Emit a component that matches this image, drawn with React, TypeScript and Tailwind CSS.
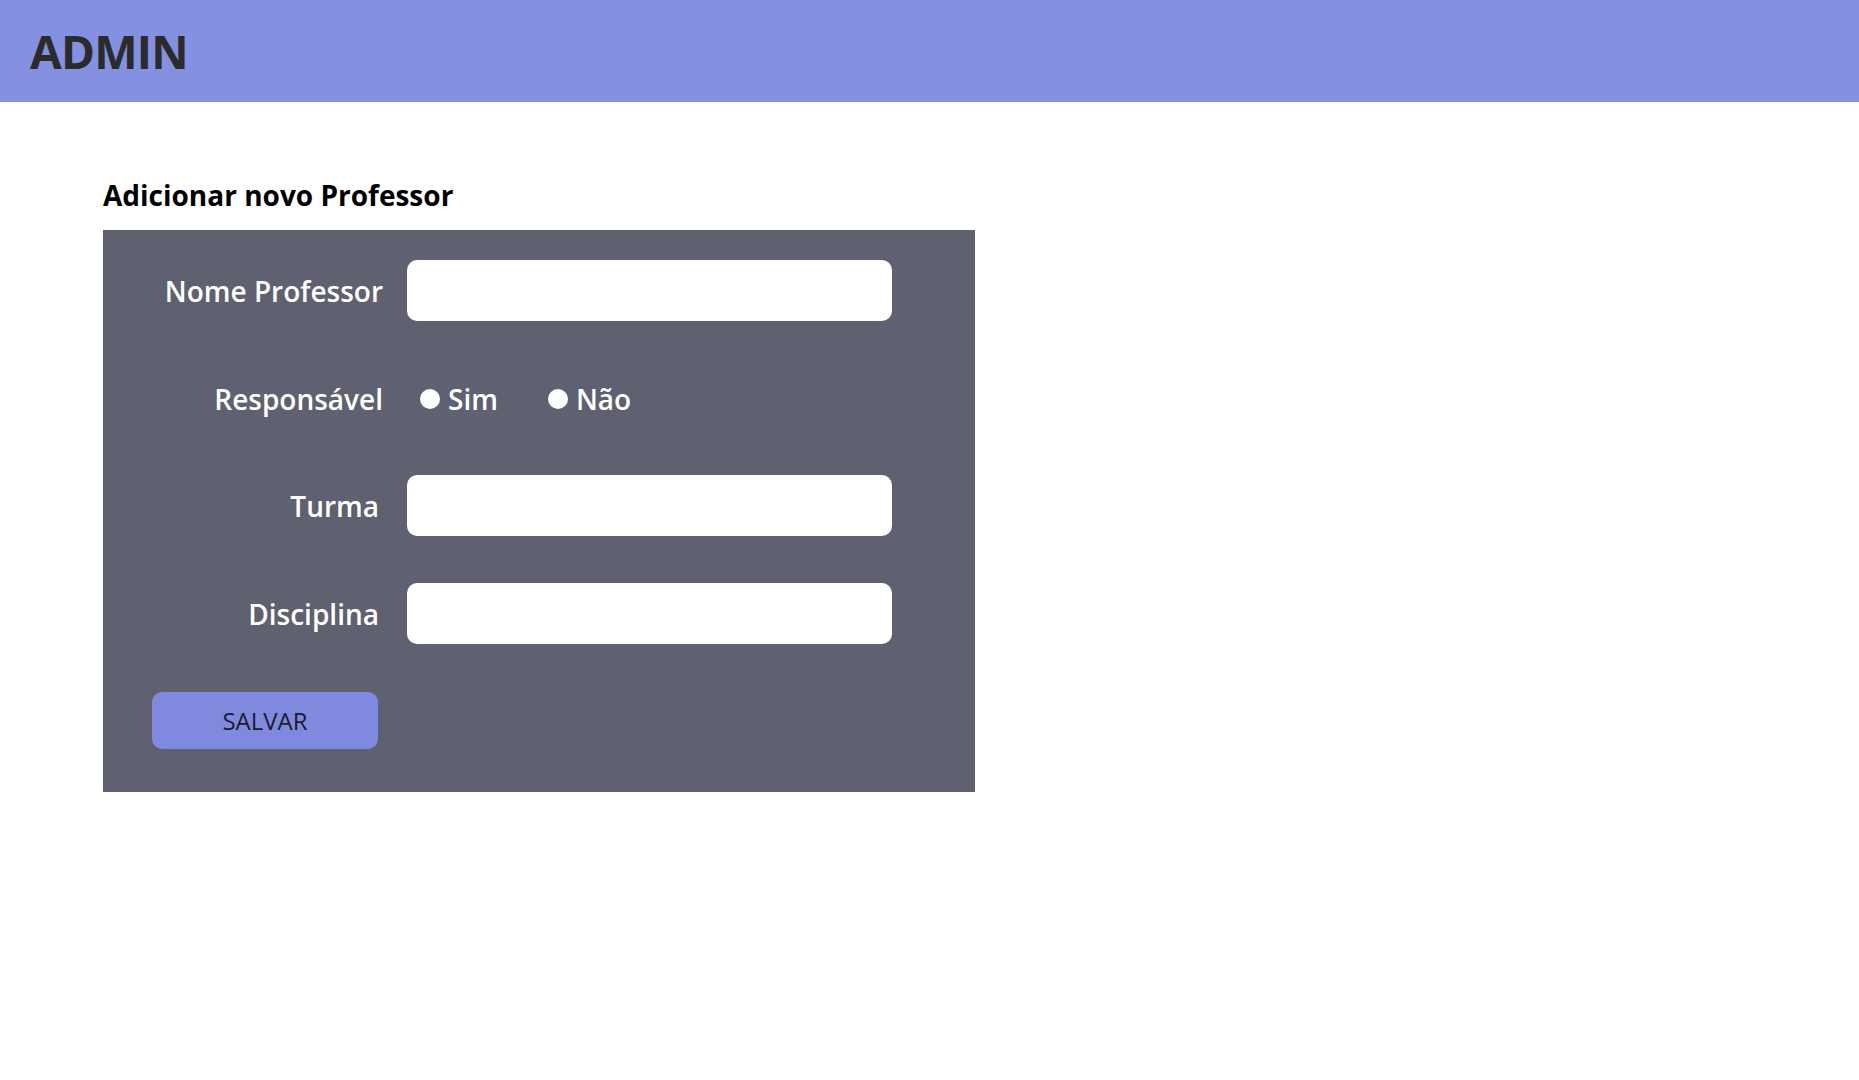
import React from "react";

const font = { fontFamily: '"Segoe UI", "Open Sans", "Noto Sans", sans-serif' };

function Field({ label, inset = false }: { label: string; inset?: boolean }) {
  return (
    <div className="flex h-[61px] items-center">
      <label
        className={
          inset
            ? "w-[281px] pr-[5px] text-right text-[28px] font-semibold text-white"
            : "w-[281px] pr-[1px] text-right text-[28px] font-semibold text-white"
        }
      >
        {label}
      </label>
      <input type="text" className="ml-[23px] h-[61px] w-[485px] rounded-[10px] bg-white px-3 text-[24px] outline-none" />
    </div>
  );
}

function Radio({ label }: { label: string }) {
  return (
    <label className="flex items-center">
      <span className="h-[20px] w-[20px] rounded-full bg-white" />
      <span className="ml-[8px] text-[28px] font-semibold text-white">{label}</span>
    </label>
  );
}

export default function App() {
  return (
    <div className="min-h-screen bg-white" style={font}>
      <header className="flex h-[102px] items-center bg-[#8490e0] px-[30px]">
        <h1 className="text-[46px] font-bold tracking-[-0.8px] text-[#2b2b2b]">ADMIN</h1>
      </header>

      <main className="pl-[103px] pt-[74px]">
        <h3 className="text-[28px] font-bold leading-[38px] text-black">Adicionar novo Professor</h3>

        <form className="mt-[16px] w-[872px] bg-[#5f6070] pb-[43px] pt-[30px]" onSubmit={(e) => e.preventDefault()}>
          <Field label="Nome Professor" />

          <div className="mt-[58px] flex h-[40px] items-center">
            <span className="w-[281px] pr-[1px] text-right text-[28px] font-semibold text-white">Responsável</span>
            <div className="ml-[36px] flex items-center gap-[50px]">
              <Radio label="Sim" />
              <Radio label="Não" />
            </div>
          </div>

          <div className="mt-[56px]">
            <Field label="Turma" inset />
          </div>
          <div className="mt-[47px]">
            <Field label="Disciplina" inset />
          </div>

          <button
            type="submit"
            className="ml-[49px] mt-[48px] h-[57px] w-[226px] rounded-[10px] bg-[#7f8ade] text-[24px] text-[#1c1c2c]"
          >
            SALVAR
          </button>
        </form>
      </main>
    </div>
  );
}
